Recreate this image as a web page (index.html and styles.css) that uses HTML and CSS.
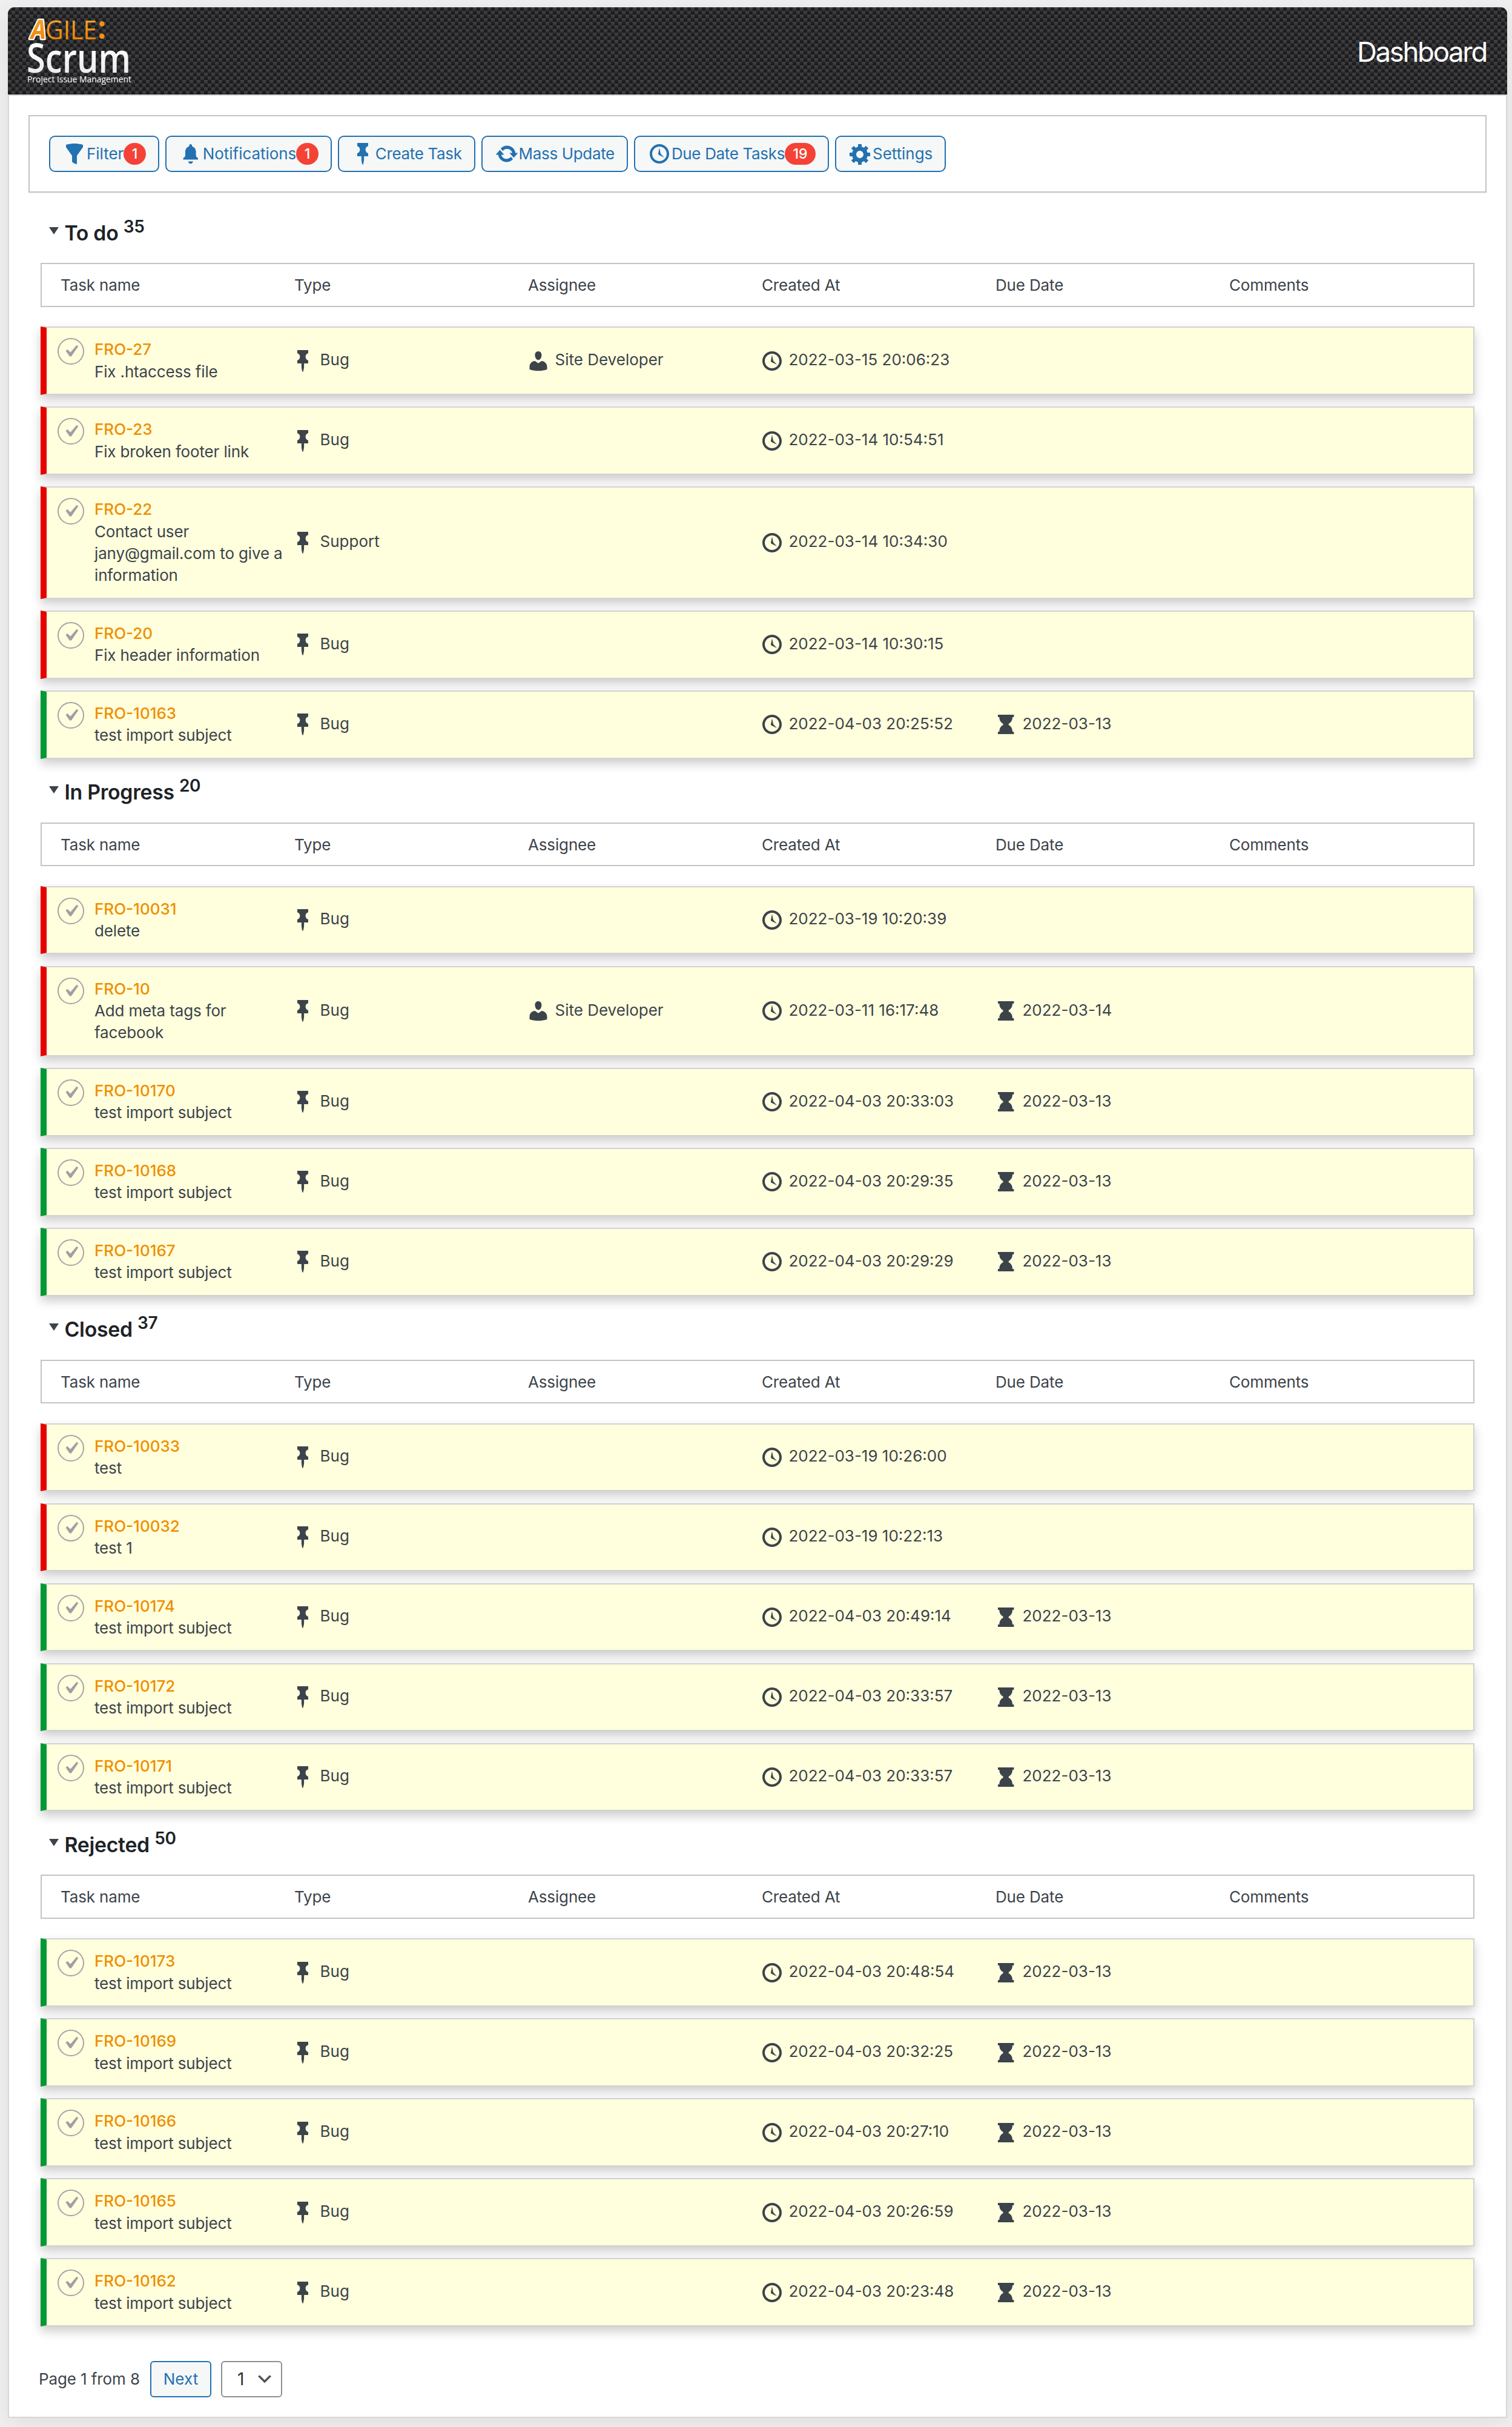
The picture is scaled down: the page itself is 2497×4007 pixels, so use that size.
FILE: index.html
```
<!DOCTYPE html>
<html lang="en">

<head>
    <meta charset="utf-8">
    <title>Agile Scrum - Dashboard</title>
    <link rel="stylesheet" href="styles.css">
</head>

<body>
<!-- icon sprite -->
<svg class="sprite">
    <symbol id="i-filter" viewBox="0 0 20 20"><path d="M3 4.5v-2s3.34-1 7-1 7 1 7 1v2l-5 7.03v6.97s-1.22-.09-2.25-.59S8 16.5 8 16.5v-4.97z"/></symbol>
    <symbol id="i-bell" viewBox="0 0 20 20"><path d="M9.9 2c.7 0 1.2.6 1.2 1.4v.5c2 .6 3.2 2.3 3.2 4.6v2.800c0 1 .6 1.500 1.700 2.200v1.300H3.800v-1.300c1.100-.7 1.700-1.200 1.700-2.200V8.500c0-2.300 1.200-4 3.200-4.600v-.5C8.700 2.600 9.200 2 9.900 2zM7.900 16.200h4c-.2 1.100-1 1.900-2 1.900s-1.800-.8-2-1.900z"/></symbol>
    <symbol id="i-pin" viewBox="0 0 20 20"><path d="M5 3.61V1.04l8.99-.01-.01 2.58c-1.22.26-2.16 1.35-2.16 2.67v.5c.01 1.31.93 2.4 2.17 2.66l-.01 2.58h-3.41l-.01 2.57c0 .6-.47 4.41-1.06 4.41-.6 0-1.08-3.81-1.08-4.41v-2.56L5 12.02l.01-2.58c1.23-.25 2.15-1.35 2.15-2.66v-.5c0-1.31-.92-2.41-2.16-2.67z"/></symbol>
    <symbol id="i-update" viewBox="0 0 20 20"><path d="M10.2 3.28c3.53 0 6.43 2.61 6.92 6h2.08l-3.5 4-3.5-4h2.32c-.45-1.97-2.21-3.45-4.32-3.45-1.45 0-2.73.71-3.54 1.78L4.95 5.66C6.23 4.2 8.11 3.28 10.2 3.28zm-.4 13.44c-3.52 0-6.43-2.61-6.92-6H.8l3.5-4c1.17 1.33 2.33 2.67 3.5 4H5.48c.45 1.97 2.21 3.45 4.32 3.45 1.45 0 2.73-.71 3.54-1.78l1.71 1.95c-1.28 1.46-3.15 2.38-5.25 2.38z"/></symbol>
    <symbol id="i-clock" viewBox="0 0 20 20"><path d="M10 2c4.42 0 8 3.58 8 8s-3.58 8-8 8-8-3.58-8-8 3.58-8 8-8zm0 14c3.31 0 6-2.69 6-6s-2.69-6-6-6-6 2.69-6 6 2.69 6 6 6zm-.71-5.29c.07.05.14.1.23.15l-.02.02L14 13l-3.03-3.19L10 5l-.97 4.81h.01c0 .02-.01.05-.02.09S9 9.97 9 10c0 .28.1.52.29.71z"/></symbol>
    <symbol id="i-gear" viewBox="0 0 20 20"><path d="M18 12h-2.18c-.17.7-.44 1.35-.81 1.93l1.54 1.54-2.1 2.1-1.54-1.54c-.58.36-1.23.63-1.91.79V19H8v-2.18c-.68-.16-1.33-.43-1.91-.79l-1.54 1.54-2.12-2.12 1.54-1.54c-.36-.58-.63-1.23-.79-1.91H1V9.03h2.17c.16-.7.44-1.35.8-1.94L2.43 5.55l2.1-2.1 1.54 1.54c.58-.37 1.24-.64 1.93-.81V2h3v2.18c.68.16 1.33.43 1.91.79l1.54-1.54 2.12 2.12-1.54 1.54c.36.59.64 1.24.8 1.94H18V12zm-8.500 1.500c1.660 0 3-1.340 3-3s-1.340-3-3-3-3 1.340-3 3 1.340 3 3 3z"/></symbol>
    <symbol id="i-user" viewBox="0 0 20 20"><path d="M10 9.25c-2.27 0-2.73-3.44-2.73-3.44C7 4.02 7.82 2 9.97 2c2.16 0 2.98 2.02 2.71 3.81 0 0-.41 3.44-2.68 3.44zm0 2.57L12.72 10c2.39 0 4.52 2.33 4.52 4.53v2.49s-3.65 1.13-7.24 1.13c-3.65 0-7.24-1.13-7.24-1.13v-2.49c0-2.25 1.94-4.48 4.47-4.48z"/></symbol>
    <symbol id="i-hourglass" viewBox="0 0 20 20"><path d="M3.5 2h13.2v1.5c0 .3-.2.5-.5.5h-.7c0 2.6-1 4.1-2.7 5.2-.7.4-.7 1.2 0 1.6 1.7 1.1 2.7 2.6 2.7 5.2h.7c.3 0 .5.2.5.5V18H3.5v-1.5c0-.3.2-.5.5-.5h.7c0-2.6 1-4.1 2.7-5.2.7-.4.7-1.2 0-1.6C5.7 8.1 4.7 6.6 4.7 4H4c-.3 0-.5-.2-.5-.5z"/></symbol>
    <symbol id="i-yes" viewBox="0 0 20 20"><path d="M14.83 4.89l1.34.94-5.81 8.38H9.02L5.78 9.67l1.34-1.25 2.57 2.4z"/></symbol>
    <symbol id="i-arrow" viewBox="0 0 20 20"><path d="M5 6l5 5 5-5 2 1-7 7-7-7 2-1z"/></symbol>
</svg>

<div class="wrap">
    <header class="header">
        <svg class="logo" viewBox="0 0 190 130" width="190" height="130">
            <defs>
                <linearGradient id="orange" x1="0" y1="0" x2="0" y2="1"><stop offset="0.2" stop-color="#f9a32a"/><stop offset="0.8" stop-color="#ee8500"/></linearGradient>
                <linearGradient id="white" x1="0" y1="0" x2="0" y2="1"><stop offset="0.3" stop-color="#fff"/><stop offset="0.9" stop-color="#e6e6e8"/></linearGradient>
            </defs>
            <text class="logo-gile" x="29" y="45" textLength="85" lengthAdjust="spacingAndGlyphs">GILE</text>
            <text class="logo-colon" x="115" y="44">:</text>
            <text class="logo-a" x="5" y="44" textLength="25" lengthAdjust="spacingAndGlyphs">A</text>
            <text class="logo-scrum" x="-2" y="99.5" textLength="172" lengthAdjust="spacingAndGlyphs">Scrum</text>
            <text class="logo-sub" x="-1" y="116" textLength="172" lengthAdjust="spacingAndGlyphs">Project Issue Management</text>
        </svg>
        <h1>Dashboard</h1>
    </header>

    <div class="content">
        <div class="toolbar">
            <a class="btn"><svg class="icon"><use href="#i-filter"/></svg>Filter<span class="badge">1</span></a>
            <a class="btn"><svg class="icon"><use href="#i-bell"/></svg>Notifications<span class="badge">1</span></a>
            <a class="btn tight"><svg class="icon"><use href="#i-pin"/></svg>Create Task</a>
            <a class="btn tight"><svg class="icon"><use href="#i-update"/></svg>Mass Update</a>
            <a class="btn tight"><svg class="icon"><use href="#i-clock"/></svg>Due Date Tasks<span class="badge">19</span></a>
            <a class="btn"><svg class="icon"><use href="#i-gear"/></svg>Settings</a>
        </div>

        <div class="board">
            <section>
                <h2>To do <sup>35</sup></h2>
                <div class="thead"><span>Task name</span><span>Type</span><span>Assignee</span><span>Created At</span><span>Due Date</span><span>Comments</span></div>
                <div class="task red">
                    <div class="name"><span class="check"><svg class="icon"><use href="#i-yes"/></svg></span><p><a>FRO-27</a>Fix .htaccess file</p></div>
                    <div class="cell type"><svg class="icon"><use href="#i-pin"/></svg><span>Bug</span></div>
                    <div class="cell"><svg class="icon"><use href="#i-user"/></svg><span>Site Developer</span></div>
                    <div class="cell"><svg class="icon"><use href="#i-clock"/></svg><span>2022-03-15 20:06:23</span></div>
                </div>
                <div class="task red">
                    <div class="name"><span class="check"><svg class="icon"><use href="#i-yes"/></svg></span><p><a>FRO-23</a>Fix broken footer link</p></div>
                    <div class="cell type"><svg class="icon"><use href="#i-pin"/></svg><span>Bug</span></div>
                    <div class="cell"></div>
                    <div class="cell"><svg class="icon"><use href="#i-clock"/></svg><span>2022-03-14 10:54:51</span></div>
                </div>
                <div class="task red">
                    <div class="name"><span class="check"><svg class="icon"><use href="#i-yes"/></svg></span><p><a>FRO-22</a>Contact user jany@gmail.com to give a information</p></div>
                    <div class="cell type"><svg class="icon"><use href="#i-pin"/></svg><span>Support</span></div>
                    <div class="cell"></div>
                    <div class="cell"><svg class="icon"><use href="#i-clock"/></svg><span>2022-03-14 10:34:30</span></div>
                </div>
                <div class="task red">
                    <div class="name"><span class="check"><svg class="icon"><use href="#i-yes"/></svg></span><p><a>FRO-20</a>Fix header information</p></div>
                    <div class="cell type"><svg class="icon"><use href="#i-pin"/></svg><span>Bug</span></div>
                    <div class="cell"></div>
                    <div class="cell"><svg class="icon"><use href="#i-clock"/></svg><span>2022-03-14 10:30:15</span></div>
                </div>
                <div class="task green">
                    <div class="name"><span class="check"><svg class="icon"><use href="#i-yes"/></svg></span><p><a>FRO-10163</a>test import subject</p></div>
                    <div class="cell type"><svg class="icon"><use href="#i-pin"/></svg><span>Bug</span></div>
                    <div class="cell"></div>
                    <div class="cell"><svg class="icon"><use href="#i-clock"/></svg><span>2022-04-03 20:25:52</span></div>
                    <div class="cell"><svg class="icon"><use href="#i-hourglass"/></svg><span>2022-03-13</span></div>
                </div>
            </section>

            <section>
                <h2>In Progress <sup>20</sup></h2>
                <div class="thead"><span>Task name</span><span>Type</span><span>Assignee</span><span>Created At</span><span>Due Date</span><span>Comments</span></div>
                <div class="task red">
                    <div class="name"><span class="check"><svg class="icon"><use href="#i-yes"/></svg></span><p><a>FRO-10031</a>delete</p></div>
                    <div class="cell type"><svg class="icon"><use href="#i-pin"/></svg><span>Bug</span></div>
                    <div class="cell"></div>
                    <div class="cell"><svg class="icon"><use href="#i-clock"/></svg><span>2022-03-19 10:20:39</span></div>
                </div>
                <div class="task red">
                    <div class="name"><span class="check"><svg class="icon"><use href="#i-yes"/></svg></span><p><a>FRO-10</a>Add meta tags for facebook</p></div>
                    <div class="cell type"><svg class="icon"><use href="#i-pin"/></svg><span>Bug</span></div>
                    <div class="cell"><svg class="icon"><use href="#i-user"/></svg><span>Site Developer</span></div>
                    <div class="cell"><svg class="icon"><use href="#i-clock"/></svg><span>2022-03-11 16:17:48</span></div>
                    <div class="cell"><svg class="icon"><use href="#i-hourglass"/></svg><span>2022-03-14</span></div>
                </div>
                <div class="task green">
                    <div class="name"><span class="check"><svg class="icon"><use href="#i-yes"/></svg></span><p><a>FRO-10170</a>test import subject</p></div>
                    <div class="cell type"><svg class="icon"><use href="#i-pin"/></svg><span>Bug</span></div>
                    <div class="cell"></div>
                    <div class="cell"><svg class="icon"><use href="#i-clock"/></svg><span>2022-04-03 20:33:03</span></div>
                    <div class="cell"><svg class="icon"><use href="#i-hourglass"/></svg><span>2022-03-13</span></div>
                </div>
                <div class="task green">
                    <div class="name"><span class="check"><svg class="icon"><use href="#i-yes"/></svg></span><p><a>FRO-10168</a>test import subject</p></div>
                    <div class="cell type"><svg class="icon"><use href="#i-pin"/></svg><span>Bug</span></div>
                    <div class="cell"></div>
                    <div class="cell"><svg class="icon"><use href="#i-clock"/></svg><span>2022-04-03 20:29:35</span></div>
                    <div class="cell"><svg class="icon"><use href="#i-hourglass"/></svg><span>2022-03-13</span></div>
                </div>
                <div class="task green">
                    <div class="name"><span class="check"><svg class="icon"><use href="#i-yes"/></svg></span><p><a>FRO-10167</a>test import subject</p></div>
                    <div class="cell type"><svg class="icon"><use href="#i-pin"/></svg><span>Bug</span></div>
                    <div class="cell"></div>
                    <div class="cell"><svg class="icon"><use href="#i-clock"/></svg><span>2022-04-03 20:29:29</span></div>
                    <div class="cell"><svg class="icon"><use href="#i-hourglass"/></svg><span>2022-03-13</span></div>
                </div>
            </section>

            <section>
                <h2>Closed <sup>37</sup></h2>
                <div class="thead"><span>Task name</span><span>Type</span><span>Assignee</span><span>Created At</span><span>Due Date</span><span>Comments</span></div>
                <div class="task red">
                    <div class="name"><span class="check"><svg class="icon"><use href="#i-yes"/></svg></span><p><a>FRO-10033</a>test</p></div>
                    <div class="cell type"><svg class="icon"><use href="#i-pin"/></svg><span>Bug</span></div>
                    <div class="cell"></div>
                    <div class="cell"><svg class="icon"><use href="#i-clock"/></svg><span>2022-03-19 10:26:00</span></div>
                </div>
                <div class="task red">
                    <div class="name"><span class="check"><svg class="icon"><use href="#i-yes"/></svg></span><p><a>FRO-10032</a>test 1</p></div>
                    <div class="cell type"><svg class="icon"><use href="#i-pin"/></svg><span>Bug</span></div>
                    <div class="cell"></div>
                    <div class="cell"><svg class="icon"><use href="#i-clock"/></svg><span>2022-03-19 10:22:13</span></div>
                </div>
                <div class="task green">
                    <div class="name"><span class="check"><svg class="icon"><use href="#i-yes"/></svg></span><p><a>FRO-10174</a>test import subject</p></div>
                    <div class="cell type"><svg class="icon"><use href="#i-pin"/></svg><span>Bug</span></div>
                    <div class="cell"></div>
                    <div class="cell"><svg class="icon"><use href="#i-clock"/></svg><span>2022-04-03 20:49:14</span></div>
                    <div class="cell"><svg class="icon"><use href="#i-hourglass"/></svg><span>2022-03-13</span></div>
                </div>
                <div class="task green">
                    <div class="name"><span class="check"><svg class="icon"><use href="#i-yes"/></svg></span><p><a>FRO-10172</a>test import subject</p></div>
                    <div class="cell type"><svg class="icon"><use href="#i-pin"/></svg><span>Bug</span></div>
                    <div class="cell"></div>
                    <div class="cell"><svg class="icon"><use href="#i-clock"/></svg><span>2022-04-03 20:33:57</span></div>
                    <div class="cell"><svg class="icon"><use href="#i-hourglass"/></svg><span>2022-03-13</span></div>
                </div>
                <div class="task green">
                    <div class="name"><span class="check"><svg class="icon"><use href="#i-yes"/></svg></span><p><a>FRO-10171</a>test import subject</p></div>
                    <div class="cell type"><svg class="icon"><use href="#i-pin"/></svg><span>Bug</span></div>
                    <div class="cell"></div>
                    <div class="cell"><svg class="icon"><use href="#i-clock"/></svg><span>2022-04-03 20:33:57</span></div>
                    <div class="cell"><svg class="icon"><use href="#i-hourglass"/></svg><span>2022-03-13</span></div>
                </div>
            </section>

            <section>
                <h2>Rejected <sup>50</sup></h2>
                <div class="thead"><span>Task name</span><span>Type</span><span>Assignee</span><span>Created At</span><span>Due Date</span><span>Comments</span></div>
                <div class="task green">
                    <div class="name"><span class="check"><svg class="icon"><use href="#i-yes"/></svg></span><p><a>FRO-10173</a>test import subject</p></div>
                    <div class="cell type"><svg class="icon"><use href="#i-pin"/></svg><span>Bug</span></div>
                    <div class="cell"></div>
                    <div class="cell"><svg class="icon"><use href="#i-clock"/></svg><span>2022-04-03 20:48:54</span></div>
                    <div class="cell"><svg class="icon"><use href="#i-hourglass"/></svg><span>2022-03-13</span></div>
                </div>
                <div class="task green">
                    <div class="name"><span class="check"><svg class="icon"><use href="#i-yes"/></svg></span><p><a>FRO-10169</a>test import subject</p></div>
                    <div class="cell type"><svg class="icon"><use href="#i-pin"/></svg><span>Bug</span></div>
                    <div class="cell"></div>
                    <div class="cell"><svg class="icon"><use href="#i-clock"/></svg><span>2022-04-03 20:32:25</span></div>
                    <div class="cell"><svg class="icon"><use href="#i-hourglass"/></svg><span>2022-03-13</span></div>
                </div>
                <div class="task green">
                    <div class="name"><span class="check"><svg class="icon"><use href="#i-yes"/></svg></span><p><a>FRO-10166</a>test import subject</p></div>
                    <div class="cell type"><svg class="icon"><use href="#i-pin"/></svg><span>Bug</span></div>
                    <div class="cell"></div>
                    <div class="cell"><svg class="icon"><use href="#i-clock"/></svg><span>2022-04-03 20:27:10</span></div>
                    <div class="cell"><svg class="icon"><use href="#i-hourglass"/></svg><span>2022-03-13</span></div>
                </div>
                <div class="task green">
                    <div class="name"><span class="check"><svg class="icon"><use href="#i-yes"/></svg></span><p><a>FRO-10165</a>test import subject</p></div>
                    <div class="cell type"><svg class="icon"><use href="#i-pin"/></svg><span>Bug</span></div>
                    <div class="cell"></div>
                    <div class="cell"><svg class="icon"><use href="#i-clock"/></svg><span>2022-04-03 20:26:59</span></div>
                    <div class="cell"><svg class="icon"><use href="#i-hourglass"/></svg><span>2022-03-13</span></div>
                </div>
                <div class="task green">
                    <div class="name"><span class="check"><svg class="icon"><use href="#i-yes"/></svg></span><p><a>FRO-10162</a>test import subject</p></div>
                    <div class="cell type"><svg class="icon"><use href="#i-pin"/></svg><span>Bug</span></div>
                    <div class="cell"></div>
                    <div class="cell"><svg class="icon"><use href="#i-clock"/></svg><span>2022-04-03 20:23:48</span></div>
                    <div class="cell"><svg class="icon"><use href="#i-hourglass"/></svg><span>2022-03-13</span></div>
                </div>
            </section>
        </div>

        <div class="pager">
            <span>Page 1 from 8</span>
            <a class="next">Next</a>
            <span class="select">1<svg class="arrow"><use href="#i-arrow"/></svg></span>
        </div>
    </div>
</div>
</body>

</html>
```
FILE: styles.css
```
* {
    box-sizing: border-box;
}

body {
    margin: 0;
    padding: 12px 8px 15px 13px;
    background: #f0f0f1;
    color: #3c434a;
    font-family: Inter, "Liberation Sans", sans-serif;
    font-size: 26px;
    font-weight: 440;
    line-height: 36.4px;
}

h1, h2, p {
    margin: 0;
}

.sprite {
    display: none;
}

.icon {
    display: block;
    width: 40px;
    height: 40px;
    flex: none;
    fill: currentColor;
}

.wrap {
    border-radius: 10px 10px 0 0;
    box-shadow: 0 8px 40px rgba(0, 0, 0, .08);
}

/* carbon header */
.header {
    display: flex;
    align-items: flex-start;
    justify-content: space-between;
    height: 144px;
    padding: 8px 34px 0 33px;
    border-radius: 10px 10px 0 0;
    background-image: linear-gradient(rgba(0, 0, 0, 0), rgba(0, 0, 0, .25)),
        repeating-conic-gradient(#222224 0 25%, #434345 0 50%);
    background-size: 6px 6px, 12px 12px;
}

.logo {
    display: block;
    overflow: visible;
    font-family: "Open Sans", sans-serif;
}

.logo-gile {
    font-size: 43px;
    font-weight: 500;
    fill: url(#orange);
}

.logo-colon {
    font-family: Lato, sans-serif;
    font-size: 57px;
    font-weight: 700;
    fill: #f29010;
}

.logo-a {
    font-size: 43px;
    font-weight: 700;
    font-style: italic;
    fill: url(#orange);
    stroke: #fff;
    stroke-width: 4.5px;
    stroke-linejoin: round;
    paint-order: stroke;
}

.logo-scrum {
    font-size: 67px;
    font-weight: 600;
    fill: url(#white);
}

.logo-sub {
    font-size: 14px;
    font-weight: 500;
    fill: #fff;
}

.header h1 {
    padding-top: 39px;
    color: #fff;
    font-size: 45.5px;
    font-weight: 440;
    line-height: 54px;
    letter-spacing: -2.3px;
}

.content {
    padding: 32px;
    border: 2px solid #d7d7d8;
    background: #fff;
}

.toolbar {
    display: flex;
    gap: 10px;
    height: 128px;
    padding: 32px;
    margin-bottom: 30.6px;
    border: 2px solid #c3c4c7;
    box-shadow: 0 2px 2px rgba(0, 0, 0, .04);
}

.btn {
    display: flex;
    align-items: center;
    height: 60px;
    padding: 0 20px;
    border: 2px solid #2271b1;
    border-radius: 10px;
    background: #f6f7f7;
    color: #2271b1;
    letter-spacing: -.05px;
}

.btn.tight {
    letter-spacing: -.34px;
}

.badge {
    min-width: 36px;
    height: 36px;
    padding: 0 13.5px;
    border-radius: 18px;
    background: #f44336;
    color: #fff;
    font-size: 23px;
    font-weight: 500;
    line-height: 36px;
    letter-spacing: 0;
}

.board, section {
    display: flow-root;
}

.board {
    padding: 0 20px;
}

h2 {
    display: flex;
    padding-left: 14px;
    margin: 12.4px 0 26px;
    color: #1d2327;
    font-size: 33.8px;
    font-weight: 600;
    line-height: 47.4px;
    letter-spacing: -.3px;
    white-space: pre;
}

h2::before {
    content: "";
    margin: 14px 9.5px 0 0;
    width: 0;
    height: 0;
    border: 8px solid transparent;
    border-top: 12px solid #3c434a;
    border-bottom: 0;
}

h2 sup {
    position: relative;
    top: -10px;
    font-size: 28px;
    vertical-align: baseline;
}

.thead {
    display: grid;
    grid-template-columns: repeat(6, 386px);
    padding: 17px 0 15px 31px;
    margin-bottom: 32.4px;
    border: 2px solid #c3c4c7;
    letter-spacing: -.15px;
}

.task {
    display: grid;
    grid-template-columns: 388px repeat(4, 386px);
    padding: 18px;
    margin-bottom: 19.2px;
    border: 2px solid #d2d2d4;
    border-left-width: 10px;
    background: #ffd;
    box-shadow: 0 8px 16px rgba(0, 0, 0, .2);
}

.task.red {
    border-left-color: #e60000;
}

.task.green {
    border-left-color: #093;
}

.name {
    display: flex;
    gap: 17px;
}

.check {
    flex: none;
    width: 44px;
    height: 44px;
    margin-top: -1px;
    border: 2px solid #a7a2aa;
    border-radius: 50%;
    color: #a29da5;
}

.name p {
    width: 325px;
    letter-spacing: -.15px;
}

.name a {
    display: block;
    color: #ee8f00;
    font-weight: 500;
    letter-spacing: 0;
}

.cell {
    display: flex;
    align-items: center;
    gap: 7.5px;
}

.cell span {
    padding-bottom: 3px;
}

/* the pin sits a little further left than the other icons */
.cell.type .icon {
    margin-left: -2px;
}

.pager {
    display: flex;
    align-items: center;
    height: 60px;
    margin: 38px 0 0 17px;
}

.pager > span:first-child {
    letter-spacing: -.1px;
}

.next {
    height: 60px;
    width: 101px;
    margin: 0 16px 0 17px;
    border: 2px solid #2271b1;
    border-radius: 6px;
    background: #f6f7f7;
    color: #2271b1;
    line-height: 56px;
    text-align: center;
}

.select {
    display: flex;
    align-items: center;
    justify-content: space-between;
    width: 101px;
    height: 60px;
    padding: 0 11px 0 25px;
    border: 2px solid #8c8f94;
    border-radius: 6px;
    color: #2c3338;
    font-size: 28px;
}

.arrow {
    width: 32px;
    height: 32px;
    fill: #555;
}
```
